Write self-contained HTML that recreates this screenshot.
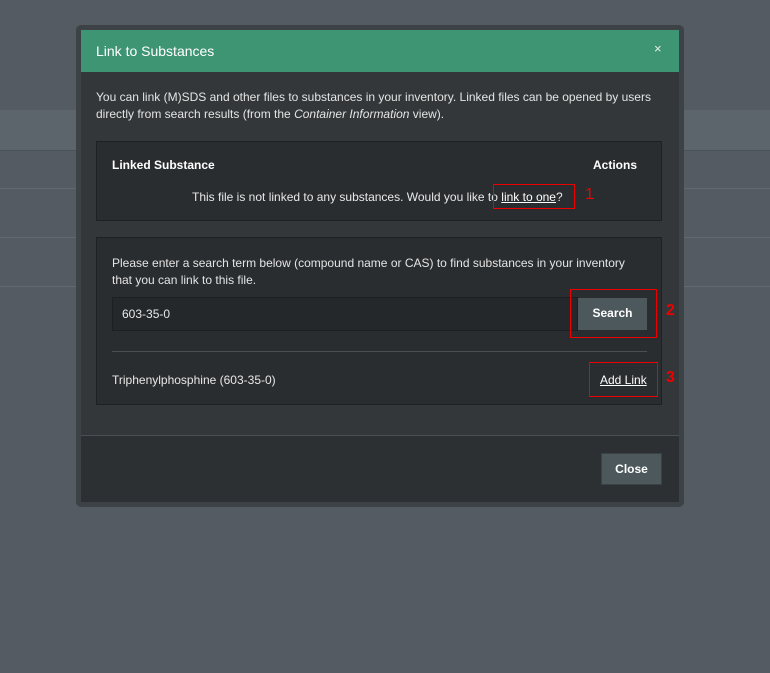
<!DOCTYPE html>
<html><head><style>
body{margin:0;width:770px;height:673px;background:#545b62;font-family:"Liberation Sans",sans-serif;position:relative;overflow:hidden;font-size:12px;color:#e8e8e8}
.abs{position:absolute}
</style></head><body>
<div class="abs" style="left:0;top:110px;width:770px;height:40px;background:#5c656b"></div>
<div class="abs" style="left:0;top:150px;width:770px;height:1px;background:#4a5157"></div>
<div class="abs" style="left:0;top:188px;width:770px;height:1px;background:#62696f"></div>
<div class="abs" style="left:0;top:237px;width:770px;height:1px;background:#62696f"></div>
<div class="abs" style="left:0;top:286px;width:770px;height:1px;background:#62696f"></div>
<div class="abs" style="left:76px;top:25px;width:608px;height:482px;background:#3d4246;border-radius:5px"></div>
<div class="abs" style="left:81px;top:30px;width:598px;height:472px;background:#33373a"></div>
<div class="abs" style="left:81px;top:30px;width:598px;height:42px;background:#3e9574"></div>
<div class="abs" style="left:96px;top:43px;font-size:14px;color:#fff;font-family:'Liberation Sans Narrow','Liberation Sans',sans-serif">Link to Substances</div>
<div class="abs" style="left:654px;top:41px;font-size:13px;color:#e8f0ec">×</div>
<div class="abs" style="left:96px;top:89px;width:570px;line-height:17px;font-size:12px;color:#e4e4e4">You can link (M)SDS and other files to substances in your inventory. Linked files can be opened by users directly from search results (from the <i>Container Information</i> view).</div>
<div class="abs" style="left:96px;top:141px;width:566px;height:80px;background:#2a2d30;border:1px solid #1e2023;box-sizing:border-box"></div>
<div class="abs" style="left:112px;top:158px;font-weight:bold;color:#fff">Linked Substance</div>
<div class="abs" style="left:593px;top:158px;font-weight:bold;color:#fff">Actions</div>
<div class="abs" style="left:192px;top:190px;color:#e8e8e8">This file is not linked to any substances. Would you like to <u style="color:#fff">link to one</u>?</div>
<div class="abs" style="left:493px;top:184px;width:82px;height:25px;border:1px solid #e00;box-sizing:border-box"></div>
<div class="abs" style="left:585px;top:186px;color:#e00;font-size:16px">1</div>
<div class="abs" style="left:96px;top:237px;width:566px;height:168px;background:#2a2d30;border:1px solid #1e2023;box-sizing:border-box"></div>
<div class="abs" style="left:112px;top:255px;width:528px;line-height:17px;color:#e4e4e4">Please enter a search term below (compound name or CAS) to find substances in your inventory that you can link to this file.</div>
<div class="abs" style="left:112px;top:297px;width:466px;height:34px;background:#25282b;border:1px solid #1d1f22;box-sizing:border-box"></div>
<div class="abs" style="left:122px;top:307px;color:#e8e8e8">603-35-0</div>
<div class="abs" style="left:578px;top:298px;width:69px;height:32px;background:#4d585d;color:#fff;font-weight:bold;text-align:center;line-height:30px">Search</div>
<div class="abs" style="left:570px;top:289px;width:87px;height:49px;border:1px solid #e00;box-sizing:border-box"></div>
<div class="abs" style="left:666px;top:302px;color:#e00;font-size:16px;font-weight:bold">2</div>
<div class="abs" style="left:112px;top:351px;width:535px;height:1px;background:#4a4f53"></div>
<div class="abs" style="left:112px;top:373px;color:#e8e8e8">Triphenylphosphine (603-35-0)</div>
<div class="abs" style="left:600px;top:373px;color:#fff"><u>Add Link</u></div>
<div class="abs" style="left:589px;top:362px;width:69px;height:35px;border:1px solid #e00;box-sizing:border-box"></div>
<div class="abs" style="left:666px;top:369px;color:#e00;font-size:16px;font-weight:bold">3</div>
<div class="abs" style="left:81px;top:435px;width:598px;height:1px;background:#4a4f53"></div>
<div class="abs" style="left:81px;top:436px;width:598px;height:66px;background:#2d3033"></div>
<div class="abs" style="left:601px;top:453px;width:61px;height:32px;background:#4d585d;border:1px solid #3a4246;box-sizing:border-box;color:#fff;font-weight:bold;text-align:center;line-height:30px">Close</div>
</body></html>
